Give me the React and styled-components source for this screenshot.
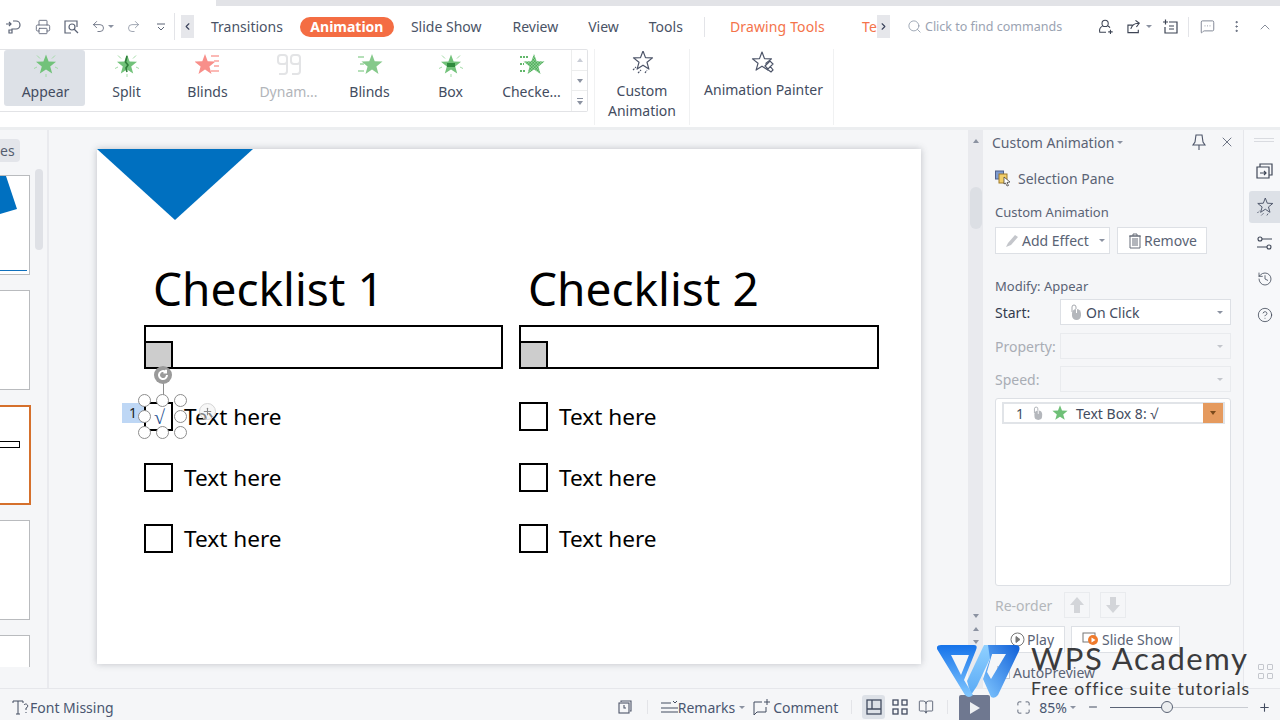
import React from "react";
import styled, { createGlobalStyle } from "styled-components";
import {
  Printer, Undo2, Redo2, Search, ChevronLeft, ChevronRight, ChevronUp, X,
  MessageSquareMore, EllipsisVertical, History, CircleHelp, Plus, Minus, Maximize, BookOpen,
} from "lucide-react";

const GlobalStyle = createGlobalStyle`
  html, body { margin: 0; padding: 0; width: 1280px; height: 720px; overflow: hidden; background: #f5f6f8; }
  * { box-sizing: border-box; }
  body { font-family: "Noto Sans", "Open Sans", sans-serif; color: #434c60; }
`;

// Star artwork used by the animation gallery
const starPoints = (cx, cy, r) => {
  const pts = [];
  for (let i = 0; i < 10; i++) {
    const rad = i % 2 === 0 ? r : r * 0.42;
    const a = -Math.PI / 2 + (i * Math.PI) / 5;
    pts.push(`${(cx + rad * Math.cos(a)).toFixed(1)},${(cy + rad * Math.sin(a)).toFixed(1)}`);
  }
  return pts.join(" ");
};

const Rays = ({ color }) => (
  <path d="M3 2.5l3 3M21 2.5l-3 3M0 15.5l3-1.5M24 15.5l-3-1.5M12 21v3" stroke={color} strokeWidth="1" />
);

const AnimIcon = ({ kind }) => {
  if (kind === "dynamic") {
    return (
      <svg width="26" height="24" viewBox="0 0 26 24" fill="none" stroke="#e3e4e6" strokeWidth="2">
        <rect x="2" y="2" width="9" height="9" rx="3" />
        <path d="M11 8v10q0 3-3 3H3" />
        <rect x="15" y="2" width="9" height="9" rx="3" />
        <path d="M24 8v10q0 3-3 3h-5" />
      </svg>
    );
  }
  if (kind === "blindsRed") {
    return (
      <svg width="26" height="24" viewBox="0 0 26 24">
        <polygon points={starPoints(10, 12, 11)} fill="#f88f8a" />
        <path d="M16 3h8M19 8h5M19 13h5M16 18h8" stroke="#fbb9b5" strokeWidth="2" />
      </svg>
    );
  }
  if (kind === "blindsGreen") {
    return (
      <svg width="26" height="24" viewBox="0 0 26 24">
        <polygon points={starPoints(15, 12, 11)} fill="#86c98b" />
        <path d="M1 4h6M3 11h4M1 18h6" stroke="#b5e0b8" strokeWidth="2" />
      </svg>
    );
  }
  if (kind === "checker") {
    return (
      <svg width="26" height="24" viewBox="0 0 26 24">
        <defs>
          <pattern id="checkFill" width="3" height="3" patternUnits="userSpaceOnUse">
            <rect width="3" height="3" fill="#4fae5a" />
            <rect width="1.5" height="1.5" fill="#8fd096" />
            <rect x="1.5" y="1.5" width="1.5" height="1.5" fill="#8fd096" />
          </pattern>
        </defs>
        <polygon points={starPoints(15, 12, 11)} fill="url(#checkFill)" />
        <path d="M1 4h8M1 11h4M1 18h6" stroke="#62b76b" strokeWidth="2" strokeDasharray="2 1" />
      </svg>
    );
  }
  return (
    <svg width="24" height="24" viewBox="0 0 24 24">
      <Rays color="#a3dba7" />
      <polygon points={starPoints(12, 12, 10.5)} fill="#72c27a" />
      {kind === "split" && <path d="M12 3l-1.5 6 2.5 3-2 3 1 4" stroke="#2f7d3a" strokeWidth="1.6" fill="none" />}
      {kind === "box" && <rect x="8" y="10" width="8" height="4" fill="#2f8a3d" />}
    </svg>
  );
};

const MouseIcon = ({ size = 15 }) => (
  <svg width={size} height={size + 3} viewBox="0 0 14 17" fill="none">
    <path d="M4 8V3q0-2 2-2t2 2v2" stroke="#a4a7ad" />
    <rect x="4" y="5" width="9" height="11" rx="4.5" fill="#b4b7bc" />
    <path d="M8.5 5v4" stroke="#fff" />
  </svg>
);

const Caret = styled.span`
  display: inline-block;
  width: 0;
  height: 0;
  margin-left: ${(p) => p.$ml || 4}px;
  border-left: 3px solid transparent;
  border-right: 3px solid transparent;
  border-top: 3px solid ${(p) => p.$color || "#8b92a1"};
`;

const Page = styled.div`
  position: relative;
  width: 1280px;
  height: 720px;
  display: flex;
  flex-direction: column;
  overflow: hidden;
`;

const TitleEdge = styled.div`
  height: 6px;
  display: flex;
  background: #e2e3e7;
  &::before { content: ""; width: 216px; background: #fff; }
`;

const TabRow = styled.div`
  height: 43px;
  padding-bottom: 2px;
  display: flex;
  align-items: center;
  background: #fff;
  color: #4a5366;
`;

const Quick = styled.span`
  display: flex;
  align-items: center;
  justify-content: center;
  width: ${(p) => p.$w || 16}px;
  margin-left: ${(p) => p.$ml || 0}px;
  color: ${(p) => p.$color || "#5b6375"};
`;

const Divider = styled.span`
  width: 1px;
  height: ${(p) => p.$h || 26}px;
  margin-left: ${(p) => p.$ml || 0}px;
  background: #e3e4e8;
`;

const ScrollTab = styled.span`
  width: 13px;
  height: 23px;
  margin-left: ${(p) => p.$ml || 0}px;
  background: #e6e7eb;
  display: flex;
  align-items: center;
  justify-content: center;
  color: #39415a;
`;

const Tab = styled.span`
  font-size: 14px;
  margin-left: ${(p) => p.$ml}px;
  letter-spacing: ${(p) => (p.$accent ? "0.15px" : "0")};
  color: ${(p) => (p.$accent ? "#f4734a" : "#4a5366")};
  white-space: nowrap;
`;

const ActiveTab = styled.span`
  width: 94px;
  height: 20px;
  margin-left: ${(p) => p.$ml}px;
  border-radius: 10px;
  background: #f46d43;
  color: #fff;
  font-size: 14px;
  font-weight: 700;
  line-height: 20px;
  text-align: center;
`;

const SearchText = styled.span`
  font-size: 12.5px;
  color: #9aa3b2;
  margin-left: 2px;
  white-space: nowrap;
`;

const Ribbon = styled.div`
  height: 78px;
  background: #fff;
  display: flex;
  align-items: flex-start;
`;

const Gallery = styled.div`
  width: 588px;
  height: 63px;
  display: flex;
  padding-left: 4px;
  border: 1px solid #e2e3e6;
  border-left: 0;
  border-radius: 0 2px 2px 0;
`;

const GalleryItem = styled.div`
  width: 81px;
  height: 56px;
  padding: 3px 0 0 2px;
  display: flex;
  flex-direction: column;
  align-items: center;
  border-radius: 3px;
  background: ${(p) => (p.$active ? "#dde1e7" : "transparent")};
  color: ${(p) => (p.$muted ? "#b2b5ba" : "#434c60")};
  font-size: 14px;
  line-height: 20px;
  white-space: nowrap;
  svg { margin-bottom: 5px; }
`;

const GalleryScroll = styled.div`
  width: 16px;
  margin-left: auto;
  display: flex;
  flex-direction: column;
  border-left: 1px solid #eceded;
`;

const ScrollCell = styled.div`
  flex: 1;
  display: flex;
  align-items: center;
  justify-content: center;
  border-bottom: ${(p) => (p.$last ? 0 : "1px solid #eceded")};
`;

const ArrowUp = styled.span`
  width: 0;
  height: 0;
  border-left: 3px solid transparent;
  border-right: 3px solid transparent;
  border-bottom: 4px solid ${(p) => p.$color || "#c9cdd6"};
`;

const ArrowDown = styled.span`
  width: 0;
  height: 0;
  border-left: 3px solid transparent;
  border-right: 3px solid transparent;
  border-top: 4px solid ${(p) => p.$color || "#8b92a1"};
`;

const RibbonButton = styled.div`
  width: ${(p) => p.$w}px;
  height: 76px;
  margin-left: ${(p) => p.$ml || 0}px;
  padding: 2px 0 0 ${(p) => p.$pl || 0}px;
  display: flex;
  flex-direction: column;
  align-items: center;
  border-right: 1px solid #f0f1f2;
  border-left: ${(p) => (p.$first ? "1px solid #f0f1f2" : 0)};
  font-size: 14px;
  line-height: 20px;
  text-align: center;
  color: #434c60;
  svg { margin-bottom: ${(p) => p.$gap || 5}px; }
`;

const RibbonRule = styled.div`
  height: 3px;
  background: #eceef0;
`;

const Body = styled.div`
  height: 558px;
  display: flex;
  background: #f5f6f8;
`;

const ThumbPanel = styled.div`
  position: relative;
  width: 49px;
  flex-shrink: 0;
  overflow: hidden;
  padding-top: 9px;
  border-right: 2px solid #e9eaee;
`;

const PanelTab = styled.div`
  width: 20px;
  height: 23px;
  border-radius: 0 4px 4px 0;
  background: #e3e5ea;
  font-size: 14px;
  line-height: 23px;
  text-align: right;
  padding-right: 9px;
  color: #555e70;
`;

const ThumbList = styled.div`
  height: 492px;
  margin-top: 13px;
  display: flex;
  flex-direction: column;
  gap: 15px;
  overflow: hidden;
`;

const Thumb = styled.div`
  position: relative;
  flex-shrink: 0;
  width: ${(p) => (p.$active ? 31 : 30)}px;
  height: 100px;
  background: #fff;
  overflow: hidden;
  border: ${(p) => (p.$active ? "2px solid #d5702c" : "1px solid #b9bbbe")};
  border-left: 0;
`;

const ThumbScroll = styled.div`
  position: absolute;
  top: 39px;
  left: 35px;
  width: 8px;
  height: 81px;
  border-radius: 4px;
  background: #dfe1e6;
`;

const ThumbBar = styled.div`
  position: absolute;
  left: 0;
  right: 2px;
  bottom: 3px;
  height: 1px;
  background: #0f70bd;
`;

const ThumbBlip = styled.div`
  position: absolute;
  left: 0;
  top: 34px;
  width: 20px;
  height: 7px;
  border: 1px solid #000;
  border-left: 0;
`;

const Canvas = styled.div`
  width: 919px;
  flex-shrink: 0;
  padding: 19px 0 0 48px;
`;

const Slide = styled.div`
  position: relative;
  width: 824px;
  height: 515px;
  background: #fff;
  box-shadow: 0 0 7px rgba(60, 66, 80, 0.3);
  padding: 112px 0 0 47px;
  display: grid;
  grid-template-columns: 359px 360px;
  column-gap: 16px;
  align-content: start;
  color: #000;
`;

const Triangle = styled.div`
  position: absolute;
  left: 0;
  top: 0;
  border-left: 78px solid transparent;
  border-right: 78px solid transparent;
  border-top: 71px solid #0070c0;
`;

const Title = styled.div`
  height: 64px;
  padding-left: 9px;
  font-size: 46px;
  line-height: 54px;
  white-space: nowrap;
`;

const HeaderBox = styled.div`
  height: 44px;
  margin-bottom: 33px;
  border: 2px solid #000;
  display: flex;
  align-items: flex-end;
`;

const HeaderSwatch = styled.div`
  width: 27px;
  height: 28px;
  margin-bottom: -2px;
  background: #cdcdcd;
  border: 2px solid #000;
  border-left: 0;
`;

const CheckRow = styled.div`
  height: 61px;
  display: flex;
  gap: 11px;
  font-size: 22.6px;
  line-height: 30px;
`;

const CheckBox = styled.div`
  width: 29px;
  height: 29px;
  border: 2px solid #000;
  background: #fff;
`;

const TagNumber = styled.div`
  position: absolute;
  left: 25px;
  top: 254px;
  width: 22px;
  height: 20px;
  background: #bed7f5;
  font-size: 14px;
  line-height: 20px;
  text-align: center;
  color: #222;
`;

const Handle = styled.div`
  position: absolute;
  left: ${(p) => p.$x - 6}px;
  top: ${(p) => p.$y - 6}px;
  width: 13px;
  height: 13px;
  border-radius: 50%;
  border: 1px solid #8d8d8d;
  background: #fff;
`;

const Rotate = styled.div`
  position: absolute;
  left: 57px;
  top: 217px;
  width: 18px;
  height: 18px;
  border-radius: 50%;
  background: #9a9a9a;
  display: flex;
  align-items: center;
  justify-content: center;
`;

const RotateStem = styled.div`
  position: absolute;
  left: 66px;
  top: 234px;
  width: 1px;
  height: 12px;
  background: #8d8d8d;
`;

const Root = styled.div`
  position: absolute;
  left: 57px;
  top: 256px;
  font-family: "Liberation Serif", serif;
  font-size: 20px;
  line-height: 24px;
  color: #1d4f8f;
`;

const PlusBadge = styled.div`
  position: absolute;
  left: 102px;
  top: 254px;
  width: 17px;
  height: 17px;
  border-radius: 50%;
  border: 1px solid #d5d5d5;
  background: rgba(240, 240, 240, 0.55);
  color: #8a8a8a;
  display: flex;
  align-items: center;
  justify-content: center;
`;

const VScroll = styled.div`
  width: 15px;
  flex-shrink: 0;
  height: 558px;
  padding-top: 9px;
  background: #e9eaee;
  display: flex;
  flex-direction: column;
  align-items: center;
`;

const VThumb = styled.div`
  width: 12px;
  height: 42px;
  margin: 44px 0 385px;
  border-radius: 6px;
  background: #dcdfe4;
`;

const VStack = styled.div`
  display: flex;
  flex-direction: column;
  align-items: center;
  gap: ${(p) => p.$gap || 0}px;
`;

const Pane = styled.div`
  width: 261px;
  flex-shrink: 0;
  padding: 0 12px;
  position: relative;
  border-right: 1px solid #e6e7eb;
`;

const PaneHeader = styled.div`
  height: 27px;
  padding-bottom: 2px;
  margin: 0 0 0 -3px;
  display: flex;
  align-items: center;
  font-size: 14px;
  color: #5a6375;
`;

const PaneActions = styled.div`
  margin: 0 -4px 2px auto;
  display: flex;
  gap: 12px;
  color: #4c5468;
`;

const SelectionLink = styled.div`
  height: 30px;
  margin-top: 6px;
  display: flex;
  align-items: center;
  gap: 6px;
  font-size: 14px;
  color: #5a6375;
`;

const SectionLabel = styled.div`
  font-size: 13px;
  line-height: 18px;
  margin-top: ${(p) => p.$mt || 0}px;
  color: #5a6375;
`;

const ButtonRow = styled.div`
  display: flex;
  gap: ${(p) => p.$gap}px;
  margin-top: ${(p) => p.$mt || 0}px;
`;

const PaneButton = styled.div`
  width: ${(p) => p.$w}px;
  height: 27px;
  padding-left: ${(p) => p.$pl || 0}px;
  display: flex;
  align-items: center;
  gap: 2px;
  background: #fff;
  border: 1px solid #dde0e5;
  font-size: 14px;
  color: #5a6375;
  white-space: nowrap;
`;

const Field = styled.div`
  display: flex;
  align-items: center;
  height: 26px;
  margin-top: ${(p) => p.$mt}px;
  font-size: 14px;
  color: ${(p) => (p.$muted ? "#a9adb5" : "#333c4e")};
`;

const FieldLabel = styled.span`
  width: 65px;
  flex-shrink: 0;
`;

const Select = styled.div`
  flex: 1;
  height: 100%;
  padding: 0 7px;
  display: flex;
  align-items: center;
  gap: 4px;
  border: 1px solid ${(p) => (p.$muted ? "#e9ebee" : "#dde0e5")};
  background: ${(p) => (p.$muted ? "transparent" : "#fff")};
  color: #434c60;
  & > :last-child { margin-left: auto; }
`;

const EffectList = styled.div`
  height: 188px;
  margin-top: 6px;
  padding: 3px 5px 3px 6px;
  border: 1px solid #dde0e5;
  border-radius: 3px;
  background: #fff;
`;

const EffectRow = styled.div`
  height: 22px;
  display: flex;
  align-items: center;
  padding-left: 12px;
  border: 2px solid #e1e4e8;
  font-size: 14px;
  color: #434c60;
`;

const EffectMouse = styled.span`
  display: flex;
  margin: 0 9px 0 7px;
`;

const EffectStar = styled.span`
  display: flex;
  margin-right: 8px;
`;

const EffectArrow = styled.div`
  width: 20px;
  height: 20px;
  margin: -1px 0 -1px auto;
  background: #e59a5e;
  display: flex;
  align-items: center;
  justify-content: center;
`;

const ReorderRow = styled.div`
  height: 26px;
  margin-top: 6px;
  display: flex;
  align-items: center;
  font-size: 14px;
  color: #b3b6bb;
`;

const ReorderButton = styled.div`
  width: 26px;
  height: 26px;
  margin-left: ${(p) => p.$ml}px;
  border: 1px solid #e9ebee;
  display: flex;
  align-items: center;
  justify-content: center;
`;

const CheckLine = styled.div`
  margin-top: 10px;
  display: flex;
  align-items: center;
  gap: 3px;
  font-size: 14px;
  color: #5a6375;
`;

const SmallCheck = styled.span`
  width: 13px;
  height: 13px;
  margin-left: 2px;
  background: #fff;
  border: 1px solid #c9ccd2;
`;

const Rail = styled.div`
  flex: 1;
  padding-top: 8px;
  display: flex;
  flex-direction: column;
  align-items: flex-end;
  background: #f7f8fa;
`;

const RailGrip = styled.div`
  width: 20px;
  height: 4px;
  margin: 0 6px 13px 0;
  border-top: 1px solid #d9dbe0;
  border-bottom: 1px solid #d9dbe0;
`;

const RailItem = styled.div`
  width: 31px;
  height: 32px;
  margin-bottom: 4px;
  border-radius: 3px 0 0 3px;
  display: flex;
  align-items: center;
  justify-content: center;
  background: ${(p) => (p.$active ? "#dde1e7" : "transparent")};
  color: #3f4757;
`;

const RailFoot = styled.div`
  margin: auto 7px 9px 0;
  display: grid;
  grid-template-columns: 6px 6px;
  gap: 3px;
  & > span { height: 6px; border: 1px solid #c4c7cd; border-radius: 1px; }
`;

const StatusBar = styled.div`
  height: 32px;
  padding-top: 5px;
  display: flex;
  align-items: center;
  border-top: 1px solid #e6e7eb;
  background: #f5f6f8;
  font-size: 14px;
  color: #4a5670;
`;

const StatusText = styled.span`
  margin-left: ${(p) => p.$ml || 0}px;
  white-space: nowrap;
`;

const StatusIcon = styled.svg`
  margin-left: ${(p) => p.$ml || 0}px;
  flex-shrink: 0;
`;

const ViewButton = styled.span`
  width: 23px;
  height: 24px;
  margin-left: ${(p) => p.$ml || 0}px;
  border-radius: 3px;
  display: flex;
  align-items: center;
  justify-content: center;
  background: ${(p) => (p.$active ? "#dde1e7" : "transparent")};
  color: #434c60;
`;

const PlayButton = styled.span`
  width: 31px;
  height: 25px;
  margin-left: 11px;
  align-self: flex-end;
  background: #6f7890;
  border-radius: 2px 2px 0 0;
  display: flex;
  align-items: center;
  justify-content: center;
`;

const ZoomTrack = styled.div`
  position: relative;
  width: 138px;
  height: 1px;
  margin-left: 9px;
  background: #c9ccd2;
  &::before {
    content: "";
    position: absolute;
    left: 0;
    top: 0;
    width: 57px;
    height: 1px;
    background: #5a6375;
  }
`;

const ZoomKnob = styled.span`
  position: absolute;
  left: 51px;
  top: -6px;
  width: 12px;
  height: 12px;
  border-radius: 50%;
  background: #eceef0;
  border: 1px solid #5a6375;
`;

const Watermark = styled.div`
  position: absolute;
  left: 937px;
  top: 639px;
  display: flex;
  gap: 10px;
  pointer-events: none;
`;

const BrandLogo = styled.svg`
  margin-top: 4px;
  flex-shrink: 0;
`;

const BrandText = styled.div`
  display: flex;
  flex-direction: column;
  color: #3b3b3d;
  font-family: "Lato", sans-serif;
  white-space: nowrap;
`;

const BrandName = styled.div`
  font-size: 31px;
  line-height: 38px;
  letter-spacing: 1.6px;
`;

const BrandSlogan = styled.div`
  font-size: 17.5px;
  line-height: 22px;
  letter-spacing: 1.05px;
  margin-top: 1px;
`;

const galleryItems = [
  { kind: "rays", label: "Appear", active: true },
  { kind: "split", label: "Split" },
  { kind: "blindsRed", label: "Blinds" },
  { kind: "dynamic", label: "Dynam...", muted: true },
  { kind: "blindsGreen", label: "Blinds" },
  { kind: "box", label: "Box" },
  { kind: "checker", label: "Checke..." },
];

const OutlineStar = ({ size = 24 }) => (
  <svg width={size} height={size} viewBox="0 0 24 24" fill="none" stroke="#4c5468" strokeWidth="1.2">
    <polygon points={starPoints(13, 10, 10)} strokeLinejoin="round" />
    <path d="M3 19l3-3M8 22l3-3M15 22l2-3" strokeDasharray="2 1" />
  </svg>
);

const PainterStar = () => (
  <svg width="26" height="24" viewBox="0 0 26 24" fill="none" stroke="#4c5468" strokeWidth="1.2">
    <polygon points={starPoints(11, 11, 10)} strokeLinejoin="round" />
    <path d="M14 15l5-5 3 3-5 5zM16 18l4 3 2-2-3-4" fill="#fff" />
  </svg>
);

const SlideColumn = ({ title }) => (
  <div>
    <Title>{title}</Title>
    <HeaderBox><HeaderSwatch /></HeaderBox>
    {[0, 1, 2].map((i) => (
      <CheckRow key={i}>
        <CheckBox />
        <span>Text here</span>
      </CheckRow>
    ))}
  </div>
);

const handles = [
  [47, 251], [65, 251], [83, 251],
  [47, 267], [83, 267],
  [47, 283], [65, 283], [83, 283],
];

const SlideEditor = () => (
  <Slide>
    <Triangle />
    <SlideColumn title="Checklist 1" />
    <SlideColumn title="Checklist 2" />
    <TagNumber>1</TagNumber>
    <RotateStem />
    <Rotate>
      <svg width="12" height="12" viewBox="0 0 12 12" fill="none" stroke="#fff" strokeWidth="2">
        <path d="M10 6a4 4 0 1 1-1.4-3M9 .8v2.6H6.4" />
      </svg>
    </Rotate>
    {handles.map(([x, y]) => <Handle key={`${x}-${y}`} $x={x} $y={y} />)}
    <Root>√</Root>
    <PlusBadge><Plus size={11} strokeWidth={2.4} /></PlusBadge>
  </Slide>
);

const AnimationPane = () => (
  <Pane>
    <PaneHeader>
      Custom Animation<Caret $ml={3} />
      <PaneActions>
        <svg width="16" height="16" viewBox="0 0 16 16" fill="none" stroke="#4c5468" strokeWidth="1.1">
          <path d="M5 1h6l1 7 2 3H2l2-3zM8 11v5" />
        </svg>
        <X size={16} strokeWidth={1.2} />
      </PaneActions>
    </PaneHeader>
    <SelectionLink>
      <svg width="17" height="17" viewBox="0 0 17 17">
        <rect x="0.5" y="1" width="8" height="8" fill="#7d9bd0" stroke="#4f5f8a" />
        <rect x="4" y="4" width="8" height="9" fill="#f2cf6b" stroke="#a07b2a" />
        <path d="M9 7l6 5-3 .5 1.5 3-1.5.5-1.5-3L9 14z" fill="#fff" stroke="#333" strokeWidth=".7" />
      </svg>
      Selection Pane
    </SelectionLink>
    <SectionLabel $mt={10}>Custom Animation</SectionLabel>
    <ButtonRow $mt={6} $gap={7}>
      <PaneButton $w={115} $pl={9}>
        <svg width="15" height="15" viewBox="0 0 15 15"><path d="M1 14l2-4 7-8 3 2-7 8z" fill="#c4c6cb" /></svg>
        Add Effect<Caret $ml={8} />
      </PaneButton>
      <PaneButton $w={90} $pl={10}>
        <svg width="14" height="16" viewBox="0 0 14 16" fill="none" stroke="#666c78">
          <path d="M1 3h12M5 3V1h4v2M2 3h10v12H2zM5 5v8M7 5v8M9 5v8" />
        </svg>
        Remove
      </PaneButton>
    </ButtonRow>
    <SectionLabel $mt={23}>Modify: Appear</SectionLabel>
    <Field $mt={4}>
      <FieldLabel>Start:</FieldLabel>
      <Select>
        <MouseIcon size={14} />
        On Click
        <Caret />
      </Select>
    </Field>
    <Field $mt={8} $muted>
      <FieldLabel>Property:</FieldLabel>
      <Select $muted><Caret $color="#c3c6cc" /></Select>
    </Field>
    <Field $mt={7} $muted>
      <FieldLabel>Speed:</FieldLabel>
      <Select $muted><Caret $color="#c3c6cc" /></Select>
    </Field>
    <EffectList>
      <EffectRow>
        1
        <EffectMouse><MouseIcon size={12} /></EffectMouse>
        <EffectStar>
          <svg width="16" height="16" viewBox="0 0 24 24">
            <polygon points={starPoints(12, 12.5, 12)} fill="#6fc077" />
          </svg>
        </EffectStar>
        Text Box 8: √
        <EffectArrow><ArrowDown $color="#7a4a1c" /></EffectArrow>
      </EffectRow>
    </EffectList>
    <ReorderRow>
      Re-order
      <ReorderButton $ml={12}>
        <svg width="16" height="18" viewBox="0 0 16 18"><path d="M8 1l7 8h-4v8H5V9H1z" fill="#d3d5d9" /></svg>
      </ReorderButton>
      <ReorderButton $ml={10}>
        <svg width="16" height="18" viewBox="0 0 16 18"><path d="M8 17l7-8h-4V1H5v8H1z" fill="#d3d5d9" /></svg>
      </ReorderButton>
    </ReorderRow>
    <ButtonRow $mt={8} $gap={6}>
      <PaneButton $w={70} $pl={14}>
        <svg width="15" height="15" viewBox="0 0 15 15" fill="none" stroke="#777">
          <circle cx="7.5" cy="7.5" r="6.5" /><path d="M6 4.5l4 3-4 3z" fill="#777" />
        </svg>
        Play
      </PaneButton>
      <PaneButton $w={109} $pl={10}>
        <svg width="18" height="17" viewBox="0 0 18 17">
          <rect x="1" y="2" width="12" height="9" fill="none" stroke="#777" />
          <circle cx="11" cy="9" r="5" fill="#ef7a2c" /><path d="M9.5 6.5l4 2.5-4 2.5z" fill="#fff" />
        </svg>
        Slide Show
      </PaneButton>
    </ButtonRow>
    <CheckLine><SmallCheck />AutoPreview</CheckLine>
  </Pane>
);

const Layout1 = () => (
  <svg width="16" height="16" viewBox="0 0 16 16" fill="none" stroke="#434c60" strokeWidth="1.3">
    <rect x="1" y="1" width="14" height="14" /><path d="M6 1v9M1 10h14" />
  </svg>
);
const Layout2 = () => (
  <svg width="16" height="16" viewBox="0 0 16 16" fill="none" stroke="#434c60" strokeWidth="1.3">
    <rect x="1" y="1" width="5" height="5" /><rect x="10" y="1" width="5" height="5" />
    <rect x="1" y="10" width="5" height="5" /><rect x="10" y="10" width="5" height="5" />
  </svg>
);

export default function App() {
  return (
    <Page>
      <GlobalStyle />
      <TitleEdge />
      <TabRow>
        <Quick $ml={5}>
          <svg width="16" height="16" viewBox="0 0 16 16" fill="none" stroke="#5b6375" strokeWidth="1.2">
            <path d="M1 5h5M4 3l2 2-2 2M8 2h3a4 4 0 0 1 0 8H7v4H4v-3h3" />
          </svg>
        </Quick>
        <Quick $ml={14}><Printer size={16} strokeWidth={1.3} /></Quick>
        <Quick $ml={12}>
          <svg width="16" height="16" viewBox="0 0 16 16" fill="none" stroke="#5b6375" strokeWidth="1.2">
            <path d="M14 8V2H2v12h6" /><circle cx="9" cy="8" r="3" /><path d="M11 10l4 4" />
          </svg>
        </Quick>
        <Quick $ml={11}><Undo2 size={15} strokeWidth={1.3} /></Quick>
        <Caret $ml={2} />
        <Quick $ml={11}><Redo2 size={15} strokeWidth={1.3} color="#8b92a1" /></Quick>
        <Quick $ml={12}>
          <svg width="10" height="10" viewBox="0 0 10 10" fill="none" stroke="#5b6375"><path d="M1 2h8M2 5l3 3 3-3" /></svg>
        </Quick>
        <Divider $ml={5} $h={27} />
        <ScrollTab $ml={6}><ChevronLeft size={11} strokeWidth={2.4} /></ScrollTab>
        <Tab $ml={17}>Transitions</Tab>
        <ActiveTab $ml={17}>Animation</ActiveTab>
        <Tab $ml={17}>Slide Show</Tab>
        <Tab $ml={31}>Review</Tab>
        <Tab $ml={30}>View</Tab>
        <Tab $ml={30}>Tools</Tab>
        <Divider $ml={21} $h={20} />
        <Tab $ml={25} $accent>Drawing Tools</Tab>
        <Tab $ml={37} $accent>Te</Tab>
        <ScrollTab><ChevronRight size={11} strokeWidth={2.4} /></ScrollTab>
        <Quick $ml={17} $color="#8d97a8"><Search size={15} strokeWidth={1.3} /></Quick>
        <SearchText>Click to find commands</SearchText>
        <Quick $ml={36}>
          <svg width="18" height="18" viewBox="0 0 18 18" fill="none" stroke="#3d4454" strokeWidth="1.2">
            <circle cx="8" cy="5" r="3.5" /><path d="M9 15H2c-1-4 1-6 3-7M11 8c1 0 2 1 2.4 2M14 12v5M11.5 14.5h5" />
          </svg>
        </Quick>
        <Quick $ml={13}>
          <svg width="17" height="16" viewBox="0 0 17 16" fill="none" stroke="#3d4454" strokeWidth="1.2">
            <path d="M6 6H1v8h11v-3M4 10c1-3 4-6 8-6M9 1l4 3-3 4" />
          </svg>
        </Quick>
        <Caret $ml={3} />
        <Quick $ml={10}>
          <svg width="15" height="15" viewBox="0 0 15 15" fill="none" stroke="#3d4454" strokeWidth="1.2">
            <path d="M0 3h5M2.5 .5v5M6 3h8v11H2V8M6 7h5M6 10h5" />
          </svg>
        </Quick>
        <Divider $ml={10} $h={20} />
        <Quick $ml={10}><MessageSquareMore size={15} strokeWidth={1.2} /></Quick>
        <Quick $ml={13}><EllipsisVertical size={15} strokeWidth={1.6} /></Quick>
        <Quick $ml={13}><ChevronUp size={18} strokeWidth={1.1} /></Quick>
      </TabRow>
      <Ribbon>
        <Gallery>
          {galleryItems.map((g, i) => (
            <GalleryItem key={i} $active={g.active} $muted={g.muted}>
              <AnimIcon kind={g.kind} />
              {g.label}
            </GalleryItem>
          ))}
          <GalleryScroll>
            <ScrollCell><ArrowUp /></ScrollCell>
            <ScrollCell><ArrowDown /></ScrollCell>
            <ScrollCell $last>
              <svg width="8" height="9" viewBox="0 0 8 9"><path d="M1 1.5h6" stroke="#8b92a1" /><path d="M1 4h6L4 8z" fill="#8b92a1" /></svg>
            </ScrollCell>
          </GalleryScroll>
        </Gallery>
        <RibbonButton $w={96} $ml={6} $gap={6} $first>
          <OutlineStar />
          Custom<br />Animation
        </RibbonButton>
        <RibbonButton $w={144} $pl={4} $gap={5}>
          <PainterStar />
          Animation Painter
        </RibbonButton>
      </Ribbon>
      <RibbonRule />
      <Body>
        <ThumbPanel>
          <PanelTab>es</PanelTab>
          <ThumbList>
            <Thumb>
              <svg width="17" height="40" viewBox="0 0 17 40"><path d="M0 0h6l11 33-17 5z" fill="#0070c0" /></svg>
              <ThumbBar />
            </Thumb>
            <Thumb />
            <Thumb $active><ThumbBlip /></Thumb>
            <Thumb />
            <Thumb />
          </ThumbList>
          <ThumbScroll />
        </ThumbPanel>
        <Canvas>
          <SlideEditor />
        </Canvas>
        <VScroll>
          <ArrowUp $color="#8b92a1" />
          <VThumb />
          <VStack $gap={9}>
            <ArrowDown />
            <ArrowUp $color="#8b92a1" />
            <ArrowDown />
          </VStack>
        </VScroll>
        <AnimationPane />
        <Rail>
          <RailGrip />
          <RailItem>
            <svg width="17" height="16" viewBox="0 0 17 16" fill="none" stroke="#3f4757" strokeWidth="1.2">
              <path d="M4 4V1h12v11h-3M1 4h12v11H1zM4 10h6M8 8l2 2-2 2" />
            </svg>
          </RailItem>
          <RailItem $active><OutlineStar size={19} /></RailItem>
          <RailItem>
            <svg width="17" height="14" viewBox="0 0 17 14" fill="none" stroke="#3f4757" strokeWidth="1.1">
              <circle cx="4" cy="3" r="2" /><path d="M6 3h10M1 11h10" /><circle cx="13" cy="11" r="2" />
            </svg>
          </RailItem>
          <RailItem><History size={16} strokeWidth={1.2} /></RailItem>
          <RailItem><CircleHelp size={16} strokeWidth={1.2} /></RailItem>
          <RailFoot><span /><span /><span /><span /></RailFoot>
        </Rail>
      </Body>
      <StatusBar>
        <StatusIcon $ml={12} width="17" height="15" viewBox="0 0 17 15" fill="none" stroke="#434c60">
          <path d="M1 3V1h10v2M6 1v13M4 14h4M12 5a2 2 0 1 1 2 3v2M14 12v1" />
        </StatusIcon>
        <StatusText $ml={1}>Font Missing</StatusText>
        <Quick $ml={503}>
          <svg width="14" height="14" viewBox="0 0 14 14" fill="none" stroke="#4c5468" strokeWidth="1.1">
            <path d="M3 2V1h10v10h-1" /><rect x="1" y="3" width="10" height="10" /><path d="M6 5v3h2" />
          </svg>
        </Quick>
        <Divider $ml={14} $h={14} />
        <StatusIcon $ml={13} width="18" height="14" viewBox="0 0 18 14" fill="none" stroke="#434c60">
          <path d="M0 3h10M0 8h17M0 12h17M12 1l2 2 2-2" />
        </StatusIcon>
        <StatusText $ml={-1}>Remarks</StatusText>
        <Caret $ml={4} />
        <StatusIcon $ml={8} width="17" height="17" viewBox="0 0 17 17" fill="none" stroke="#434c60">
          <path d="M9 3H1v13l3-3h9V8M14 0v6M11 3h6" />
        </StatusIcon>
        <StatusText $ml={3}>Comment</StatusText>
        <Divider $ml={13} $h={14} />
        <ViewButton $ml={10} $active><Layout1 /></ViewButton>
        <ViewButton $ml={3}><Layout2 /></ViewButton>
        <ViewButton $ml={3}><BookOpen size={16} strokeWidth={1.2} /></ViewButton>
        <Divider $ml={10} $h={14} />
        <PlayButton>
          <svg width="10" height="12" viewBox="0 0 10 12"><path d="M0 0l10 6-10 6z" fill="#eef0f3" /></svg>
        </PlayButton>
        <Quick $ml={25}><Maximize size={15} strokeWidth={1.3} color="#434c60" /></Quick>
        <StatusText $ml={8}>85%</StatusText>
        <Caret $ml={3} />
        <Quick $ml={9} $color="#434c60"><Minus size={12} strokeWidth={2} /></Quick>
        <ZoomTrack><ZoomKnob /></ZoomTrack>
        <Quick $ml={9} $color="#434c60"><Plus size={13} strokeWidth={2} /></Quick>
      </StatusBar>
      <Watermark>
        <BrandLogo width="84" height="56" viewBox="7 6 84 56">
          <defs>
            <linearGradient id="wpsA" x1="0" y1="0" x2="0" y2="1">
              <stop offset="0" stopColor="#1673ea" /><stop offset="1" stopColor="#82c8ff" />
            </linearGradient>
            <linearGradient id="wpsB" x1="0" y1="0" x2="0" y2="1">
              <stop offset="0" stopColor="#8fd0ff" /><stop offset="1" stopColor="#5aaaf5" />
            </linearGradient>
            <linearGradient id="wpsC" x1="1" y1="0" x2="0" y2="1">
              <stop offset="0" stopColor="#0f5fd8" /><stop offset="1" stopColor="#82c8ff" />
            </linearGradient>
          </defs>
          <path d="M54 8h8l3 3-18 38-6 9-4-14z" fill="url(#wpsB)" />
          <path fillRule="evenodd" d="M7 12Q6 8 11 8H44Q48 8 46 13L34 43 43 58Q39 62 35 58ZM21 18H39L31 38Z" fill="url(#wpsA)" />
          <path fillRule="evenodd" d="M58 8H85Q91 8 89 14L68 58Q65 62 61 60L53 42 60 22ZM62 17H76L61 42 57 35Z" fill="url(#wpsC)" />
        </BrandLogo>
        <BrandText>
          <BrandName>WPS Academy</BrandName>
          <BrandSlogan>Free office suite tutorials</BrandSlogan>
        </BrandText>
      </Watermark>
    </Page>
  );
}
